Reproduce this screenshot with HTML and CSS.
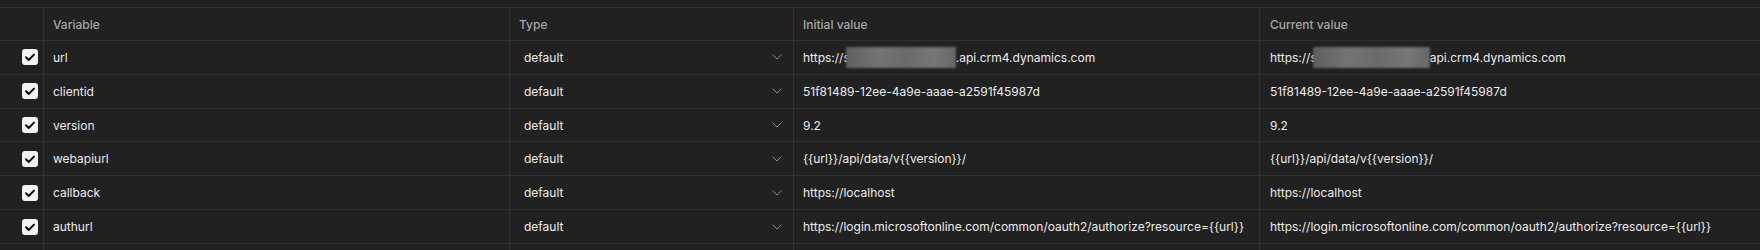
FILE: index.html
```html
<!DOCTYPE html>
<html>
<head>
<meta charset="utf-8">
<link rel="stylesheet" href="styles.css">
</head>
<body>
<div class="topbar"></div>
<div class="grid">
  <div class="cell head"></div>
  <div class="cell head">Variable</div>
  <div class="cell head">Type</div>
  <div class="cell head">Initial value</div>
  <div class="cell head last">Current value</div>

  <div class="cell chk"><span class="box"><svg viewBox="0 0 16 16" width="16" height="16"><path d="M4 8.3l2.7 2.7L12 5.6" fill="none" stroke="#111" stroke-width="2" stroke-linecap="round" stroke-linejoin="round"/></svg></span></div>
  <div class="cell">url</div>
  <div class="cell type"><span>default</span><svg class="chev" viewBox="0 0 10 6" width="10" height="6"><path d="M0.5 0.5L5 5L9.5 0.5" fill="none" stroke="#8c8c8c" stroke-width="1"/></svg></div>
  <div class="cell">https://s<span class="blur b1"></span>.api.crm4.dynamics.com</div>
  <div class="cell last">https://s<span class="blur b2"></span>api.crm4.dynamics.com</div>

  <div class="cell chk"><span class="box"><svg viewBox="0 0 16 16" width="16" height="16"><path d="M4 8.3l2.7 2.7L12 5.6" fill="none" stroke="#111" stroke-width="2" stroke-linecap="round" stroke-linejoin="round"/></svg></span></div>
  <div class="cell">clientid</div>
  <div class="cell type"><span>default</span><svg class="chev" viewBox="0 0 10 6" width="10" height="6"><path d="M0.5 0.5L5 5L9.5 0.5" fill="none" stroke="#8c8c8c" stroke-width="1"/></svg></div>
  <div class="cell">51f81489-12ee-4a9e-aaae-a2591f45987d</div>
  <div class="cell last">51f81489-12ee-4a9e-aaae-a2591f45987d</div>

  <div class="cell chk"><span class="box"><svg viewBox="0 0 16 16" width="16" height="16"><path d="M4 8.3l2.7 2.7L12 5.6" fill="none" stroke="#111" stroke-width="2" stroke-linecap="round" stroke-linejoin="round"/></svg></span></div>
  <div class="cell">version</div>
  <div class="cell type"><span>default</span><svg class="chev" viewBox="0 0 10 6" width="10" height="6"><path d="M0.5 0.5L5 5L9.5 0.5" fill="none" stroke="#8c8c8c" stroke-width="1"/></svg></div>
  <div class="cell">9.2</div>
  <div class="cell last">9.2</div>

  <div class="cell chk"><span class="box"><svg viewBox="0 0 16 16" width="16" height="16"><path d="M4 8.3l2.7 2.7L12 5.6" fill="none" stroke="#111" stroke-width="2" stroke-linecap="round" stroke-linejoin="round"/></svg></span></div>
  <div class="cell">webapiurl</div>
  <div class="cell type"><span>default</span><svg class="chev" viewBox="0 0 10 6" width="10" height="6"><path d="M0.5 0.5L5 5L9.5 0.5" fill="none" stroke="#8c8c8c" stroke-width="1"/></svg></div>
  <div class="cell">{{url}}/api/data/v{{version}}/</div>
  <div class="cell last">{{url}}/api/data/v{{version}}/</div>

  <div class="cell chk"><span class="box"><svg viewBox="0 0 16 16" width="16" height="16"><path d="M4 8.3l2.7 2.7L12 5.6" fill="none" stroke="#111" stroke-width="2" stroke-linecap="round" stroke-linejoin="round"/></svg></span></div>
  <div class="cell">callback</div>
  <div class="cell type"><span>default</span><svg class="chev" viewBox="0 0 10 6" width="10" height="6"><path d="M0.5 0.5L5 5L9.5 0.5" fill="none" stroke="#8c8c8c" stroke-width="1"/></svg></div>
  <div class="cell">https://localhost</div>
  <div class="cell last">https://localhost</div>

  <div class="cell chk"><span class="box"><svg viewBox="0 0 16 16" width="16" height="16"><path d="M4 8.3l2.7 2.7L12 5.6" fill="none" stroke="#111" stroke-width="2" stroke-linecap="round" stroke-linejoin="round"/></svg></span></div>
  <div class="cell">authurl</div>
  <div class="cell type"><span>default</span><svg class="chev" viewBox="0 0 10 6" width="10" height="6"><path d="M0.5 0.5L5 5L9.5 0.5" fill="none" stroke="#8c8c8c" stroke-width="1"/></svg></div>
  <div class="cell">https://login.microsoftonline.com/common/oauth2/authorize?resource={{url}}</div>
  <div class="cell last">https://login.microsoftonline.com/common/oauth2/authorize?resource={{url}}</div>

  <div class="cell tail"></div>
  <div class="cell tail"></div>
  <div class="cell tail"></div>
  <div class="cell tail"></div>
  <div class="cell tail last"></div>
</div>
</body>
</html>
```

FILE: styles.css
```css
html, body {
  margin: 0;
  padding: 0;
  background: #212121;
  overflow: hidden;
}
body {
  font-family: Inter, "Liberation Sans", sans-serif;
  font-size: 12px;
  color: #ececec;
  width: 1760px;
  height: 250px;
}
.topbar {
  height: 7px;
  border-bottom: 1px solid #303030;
}
.grid {
  display: grid;
  grid-template-columns: 44px 466px 284px 466px 1fr;
  grid-template-rows: 33px repeat(6, 33.83px) 6px;
}
.cell {
  box-sizing: border-box;
  border-right: 1px solid #303030;
  border-bottom: 1px solid #303030;
  display: flex;
  align-items: center;
  padding: 0 9px;
  white-space: nowrap;
  overflow: hidden;
}
.cell.last {
  border-right: none;
  padding-left: 10px;
}
.cell.tail {
  border-bottom: none;
}
.head {
  color: #a6a6a6;
  font-weight: 500;
}
.chk {
  justify-content: flex-end;
  padding: 0 5px 0 0;
}
.box {
  width: 16px;
  height: 16px;
  background: #f2f2f2;
  border-radius: 3px;
  display: flex;
}
.type {
  padding: 0 11px 0 14px;
  justify-content: space-between;
}
.chev {
  display: block;
}
.blur {
  display: inline-block;
  height: 21px;
  margin-left: -4px;
  background: linear-gradient(90deg, #5e5e5e, #747474 30%, #6a6a6a 55%, #777 80%, #666);
  filter: blur(0.8px);
  border-radius: 1px;
}
.b1 { width: 110px; }
.b2 { width: 117px; }
```
